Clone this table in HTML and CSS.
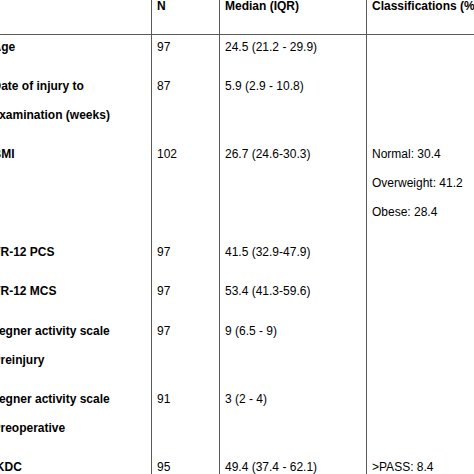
FILE: index.html
```html
<!DOCTYPE html>
<html>
<head>
<meta charset="utf-8">
<link rel="stylesheet" href="styles.css">
</head>
<body>
<table class="tbl">
  <colgroup>
    <col class="c1">
    <col class="c2">
    <col class="c3">
    <col class="c4">
  </colgroup>
  <thead>
    <tr>
      <th class="lbl"><div class="in"></div></th>
      <th class="sep"><div class="in">N</div></th>
      <th class="sep"><div class="in">Median (IQR)</div></th>
      <th class="sep"><div class="in">Classifications (%)</div></th>
    </tr>
  </thead>
  <tbody>
    <tr>
      <td class="lbl"><div class="in">Age</div></td>
      <td class="sep"><div class="in">97</div></td>
      <td class="sep"><div class="in">24.5 (21.2 - 29.9)</div></td>
      <td class="sep"><div class="in"></div></td>
    </tr>
    <tr>
      <td class="lbl"><div class="in">Date of injury to<br>examination (weeks)</div></td>
      <td class="sep"><div class="in">87</div></td>
      <td class="sep"><div class="in">5.9 (2.9 - 10.8)</div></td>
      <td class="sep"><div class="in"></div></td>
    </tr>
    <tr>
      <td class="lbl"><div class="in">BMI</div></td>
      <td class="sep"><div class="in">102</div></td>
      <td class="sep"><div class="in">26.7 (24.6-30.3)</div></td>
      <td class="sep"><div class="in">Normal: 30.4<br>Overweight: 41.2<br>Obese: 28.4</div></td>
    </tr>
    <tr>
      <td class="lbl"><div class="in">VR-12 PCS</div></td>
      <td class="sep"><div class="in">97</div></td>
      <td class="sep"><div class="in">41.5 (32.9-47.9)</div></td>
      <td class="sep"><div class="in"></div></td>
    </tr>
    <tr>
      <td class="lbl"><div class="in">VR-12 MCS</div></td>
      <td class="sep"><div class="in">97</div></td>
      <td class="sep"><div class="in">53.4 (41.3-59.6)</div></td>
      <td class="sep"><div class="in"></div></td>
    </tr>
    <tr>
      <td class="lbl"><div class="in">Tegner activity scale<br>Preinjury</div></td>
      <td class="sep"><div class="in">97</div></td>
      <td class="sep"><div class="in">9 (6.5 - 9)</div></td>
      <td class="sep"><div class="in"></div></td>
    </tr>
    <tr>
      <td class="lbl"><div class="in">Tegner activity scale<br>Preoperative</div></td>
      <td class="sep"><div class="in">91</div></td>
      <td class="sep"><div class="in">3 (2 - 4)</div></td>
      <td class="sep"><div class="in"></div></td>
    </tr>
    <tr>
      <td class="lbl"><div class="in">IKDC</div></td>
      <td class="sep"><div class="in">95</div></td>
      <td class="sep"><div class="in">49.4 (37.4 - 62.1)</div></td>
      <td class="sep"><div class="in">&gt;PASS: 8.4<br>&lt;PASS: 91.6</div></td>
    </tr>
  </tbody>
</table>
</body>
</html>
```

FILE: styles.css
```css
html, body {
  margin: 0;
  padding: 0;
  width: 474px;
  height: 474px;
  overflow: hidden;
  background: #ffffff;
}

.tbl {
  font-family: "Liberation Sans", Arial, sans-serif;
  font-size: 12px;
  line-height: 29px;
  color: #000;
  border-collapse: separate;
  border-spacing: 0;
  table-layout: fixed;
  width: 544px;
  margin-top: -5.7px;
  margin-left: -14px;
}

.c1 { width: 165px; }
.c2 { width: 68px; }
.c3 { width: 147px; }
.c4 { width: 164px; }

.tbl th,
.tbl td {
  box-sizing: border-box;
  padding: 0 0 12.4px 5px;
  vertical-align: top;
  text-align: left;
  white-space: nowrap;
}

.tbl th {
  font-weight: bold;
  border-bottom: 1px solid #5a5a5a;
}

.tbl .lbl {
  padding-left: 6.5px;
  font-weight: bold;
}

.tbl .sep {
  border-left: 1px solid #5a5a5a;
}

.in {
  margin-top: -2px;
  min-height: 29px;
}
```
